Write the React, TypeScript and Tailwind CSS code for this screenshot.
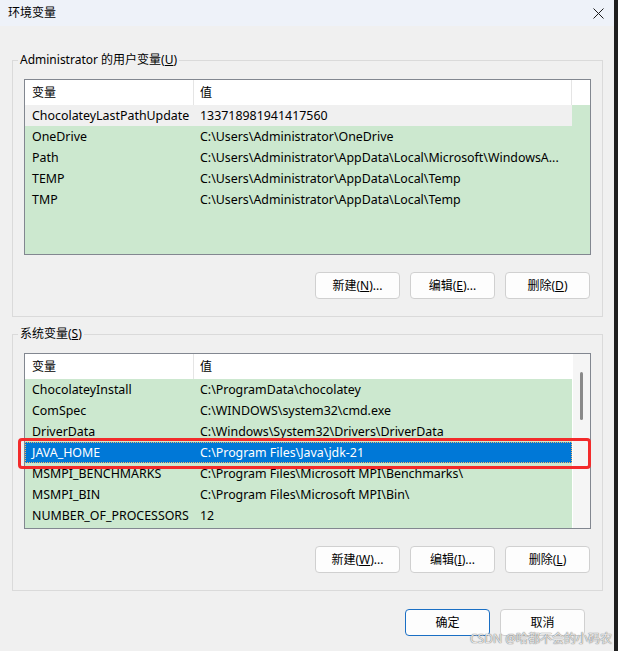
import React from "react";

const FONT = { fontFamily: '"Noto Sans", "Noto Sans CJK SC", sans-serif' };

type RowProps = { name: string; value: string; variant?: "normal" | "gray" | "selected" };

function Row({ name, value, variant = "normal" }: RowProps) {
  const cls =
    variant === "gray"
      ? "bg-[#f0f0f0] text-black"
      : variant === "selected"
      ? "bg-[#0078d7] text-white border border-dotted border-[#f2b468]"
      : "text-black";
  return (
    <div className={`flex h-[21px] items-center pt-[1px] text-[12.4px] ${cls}`}>
      <div className={`w-[169px] shrink-0 truncate ${variant === "selected" ? "pl-[6px]" : "pl-[7px]"}`}>{name}</div>
      <div className={`flex-1 truncate ${variant === "selected" ? "pl-[5px]" : "pl-[6px]"}`}>{value}</div>
    </div>
  );
}

function Header({ lastDivider }: { lastDivider: boolean }) {
  return (
    <div className="flex h-[25px] shrink-0 items-center bg-white text-black">
      <div className="flex h-full w-[169px] shrink-0 items-center border-r border-[#e5e5e5] pl-[7px]">变量</div>
      <div className={`flex h-full flex-1 items-center pl-[6px] ${lastDivider ? "border-r border-[#e5e5e5]" : ""}`}>值</div>
    </div>
  );
}

function Btn({ children, primary }: { children: React.ReactNode; primary?: boolean }) {
  return (
    <div
      className={`flex h-[27px] w-[85px] items-center justify-center rounded-[4px] bg-[#fdfdfd] text-black ${
        primary ? "border-[1.5px] border-[#1a6fc4]" : "border border-[#d0d0d0]"
      }`}
    >
      {children}
    </div>
  );
}

function GroupBox({ legend, children }: { legend: React.ReactNode; children: React.ReactNode }) {
  return (
    <div className="mx-[12px] mr-[11px] h-[257px] border border-[#dadada] px-[11px]">
      <div className="-mt-[9px] -ml-[6px] w-fit bg-[#f0f0f0] px-[2px] leading-[16px] text-black">{legend}</div>
      {children}
    </div>
  );
}

export default function App() {
  const userRows: RowProps[] = [
    { name: "ChocolateyLastPathUpdate", value: "133718981941417560", variant: "gray" },
    { name: "OneDrive", value: "C:\\Users\\Administrator\\OneDrive" },
    { name: "Path", value: "C:\\Users\\Administrator\\AppData\\Local\\Microsoft\\WindowsA..." },
    { name: "TEMP", value: "C:\\Users\\Administrator\\AppData\\Local\\Temp" },
    { name: "TMP", value: "C:\\Users\\Administrator\\AppData\\Local\\Temp" },
  ];
  const sysRows: RowProps[] = [
    { name: "ChocolateyInstall", value: "C:\\ProgramData\\chocolatey" },
    { name: "ComSpec", value: "C:\\WINDOWS\\system32\\cmd.exe" },
    { name: "DriverData", value: "C:\\Windows\\System32\\Drivers\\DriverData" },
    { name: "JAVA_HOME", value: "C:\\Program Files\\Java\\jdk-21", variant: "selected" },
    { name: "MSMPI_BENCHMARKS", value: "C:\\Program Files\\Microsoft MPI\\Benchmarks\\" },
    { name: "MSMPI_BIN", value: "C:\\Program Files\\Microsoft MPI\\Bin\\" },
    { name: "NUMBER_OF_PROCESSORS", value: "12" },
  ];

  return (
    <div className="relative flex h-[651px] w-[618px] overflow-hidden bg-[#f0f0f0] text-[12px]" style={FONT}>
      <div className="flex w-[614px] flex-col">
        {/* Title bar */}
        <div className="flex h-[26px] shrink-0 items-center justify-between bg-[#eef2f9] pl-[8px] pr-[10px]">
          <span className="text-[12px] text-black">环境变量</span>
          <svg width="11" height="11" viewBox="0 0 11 11">
            <path d="M0.5 0.5 L10.5 10.5 M10.5 0.5 L0.5 10.5" stroke="#1a1a1a" strokeWidth="1" />
          </svg>
        </div>

        <div className="mt-[34px]">
          <GroupBox legend={<span>Administrator 的用户变量(<u>U</u>)</span>}>
            <div className="mt-[11px] flex h-[176px] border border-[#828790] bg-[#cce8cf]">
              <div className="flex w-[547px] flex-col">
                <Header lastDivider />
                {userRows.map((r) => (
                  <Row key={r.name} {...r} />
                ))}
              </div>
              <div className="flex flex-1 flex-col">
                <div className="h-[25px] bg-white" />
              </div>
            </div>
            <div className="mt-[17px] flex justify-end gap-[10px] pr-[1px]">
              <Btn>
                新建(<u>N</u>)...
              </Btn>
              <Btn>
                编辑(<u>E</u>)...
              </Btn>
              <Btn>
                删除(<u>D</u>)
              </Btn>
            </div>
          </GroupBox>
        </div>

        <div className="mt-[17px]">
          <GroupBox legend={<span>系统变量(<u>S</u>)</span>}>
            <div className="mt-[11px] flex h-[176px] border border-[#828790] bg-[#cce8cf]">
              <div className="flex w-[547px] flex-col overflow-hidden">
                <Header lastDivider={false} />
                {sysRows.map((r) => (
                  <Row key={r.name} {...r} />
                ))}
              </div>
              <div className="flex flex-1 flex-col items-center border-l border-white bg-[#f5f5f5] pt-[18px]">
                <div className="h-[48px] w-[3px] rounded-full bg-[#8a8a8a]" />
              </div>
            </div>
            <div className="mt-[17px] flex justify-end gap-[10px] pr-[1px]">
              <Btn>
                新建(<u>W</u>)...
              </Btn>
              <Btn>
                编辑(<u>I</u>)...
              </Btn>
              <Btn>
                删除(<u>L</u>)
              </Btn>
            </div>
          </GroupBox>
        </div>

        <div className="mt-[18px] flex justify-end gap-[10px] pr-[29px]">
          <Btn primary>确定</Btn>
          <Btn>取消</Btn>
        </div>
      </div>
      <div className="w-[4px] bg-[#1f1f1f]" />

      {/* red annotation box */}
      <div className="pointer-events-none absolute left-[18px] top-[438px] h-[31px] w-[573px] rounded-[4px] border-[3px] border-[#f32b2b]" />

      {/* watermark */}
      <div className="pointer-events-none absolute bottom-[4px] right-[6px] text-[12px] leading-[16px] text-[#ffffffd0] [text-shadow:0_0_1px_#777,0_0_1px_#777]">
        CSDN @哈都不会的小码农
      </div>
    </div>
  );
}
